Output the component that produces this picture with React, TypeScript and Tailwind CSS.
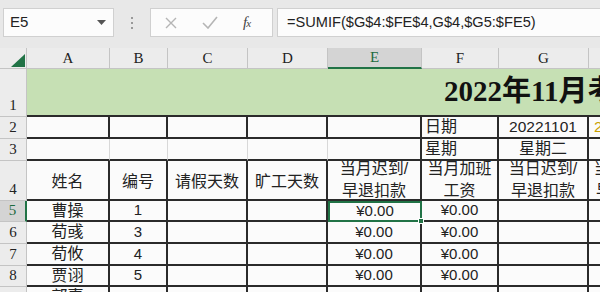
import React from "react";

const SERIF = { fontFamily: '"Liberation Serif", "Noto Sans CJK SC", serif' };

function Cell({
  children,
  className = "",
}: {
  children?: React.ReactNode;
  className?: string;
}) {
  return <div className={"overflow-visible whitespace-nowrap " + className}>{children}</div>;
}

export default function App() {
  const cols = ["A", "B", "C", "D", "E", "F", "G", "H"];
  const names = [
    ["曹操", "1"],
    ["荀彧", "3"],
    ["荀攸", "4"],
    ["贾诩", "5"],
  ];
  const cellB = "border-r-2 border-b-2 border-[#2b2b2b]";
  return (
    <div
      className="w-[600px] h-[292px] overflow-hidden bg-[#e8e8e8] text-[#222]"
      style={{ fontFamily: '"Liberation Sans", "Noto Sans CJK SC", sans-serif' }}
    >
      {/* formula bar */}
      <div className="h-[48px] flex items-start pt-[8px] pl-[3px]">
        <div className="w-[111px] h-[29px] bg-[#fcfcfc] border border-[#d0d0d0] flex items-center justify-between pl-[6px] pr-[7px]">
          <span className="text-[15px] text-[#222]">E5</span>
          <svg width="9" height="5" viewBox="0 0 9 5">
            <path d="M0 0 L9 0 L4.5 5 Z" fill="#555" />
          </svg>
        </div>
        <div className="w-[36px] h-[29px] flex flex-col items-center justify-center gap-[3px]">
          <div className="w-[2px] h-[2px] bg-[#999]" />
          <div className="w-[2px] h-[2px] bg-[#999]" />
          <div className="w-[2px] h-[2px] bg-[#999]" />
        </div>
        <div className="w-[123px] h-[29px] bg-[#fcfcfc] border border-[#d0d0d0] flex items-center pl-[14px] gap-[25px]">
          <svg width="12" height="12" viewBox="0 0 12 12">
            <path d="M1 1 L11 11 M11 1 L1 11" stroke="#b5b5b5" strokeWidth="1.4" />
          </svg>
          <svg width="16" height="13" viewBox="0 0 16 13">
            <path d="M1 7 L6 12 L15 1" stroke="#b5b5b5" strokeWidth="1.6" fill="none" />
          </svg>
          <span className="text-[15px] italic text-[#444] tracking-[-1px]" style={SERIF}>
            f<span className="text-[11px]">x</span>
          </span>
        </div>
        <div className="flex-1 ml-[4px] h-[29px] bg-[#fcfcfc] border border-r-0 border-[#d0d0d0] flex items-center pl-[9px]">
          <span className="text-[14.6px] text-[#222] whitespace-nowrap">=SUMIF($G$4:$FE$4,G$4,$G5:$FE5)</span>
        </div>
      </div>

      {/* sheet */}
      <div
        className="grid bg-[#fbfbfb]"
        style={{
          gridTemplateColumns: "27px 83px 58px 80px 80px 94px 77px 90px 80px",
          gridTemplateRows: "21px 48px 22px 22px 40px 21px 22px 22px 21px 22px",
        }}
      >
        {/* column header row */}
        <div className="bg-[#ececec] border-r border-b border-[#c4c4c4] flex items-end justify-end pr-[1px] pb-[1px]">
          <svg width="14" height="13" viewBox="0 0 14 13">
            <path d="M14 0 L14 13 L0 13 Z" fill="#217346" />
          </svg>
        </div>
        {cols.map((c) =>
          c === "E" ? (
            <div
              key={c}
              className="bg-[#d4d4d4] border-r border-[#c4c4c4] border-b-2 border-b-[#217346] flex items-center justify-center text-[15px] text-[#1d6b3f]"
              style={SERIF}
            >
              {c}
            </div>
          ) : (
            <div
              key={c}
              className="bg-[#ececec] border-r border-b border-[#c4c4c4] flex items-center justify-center text-[15px] text-[#222]"
              style={SERIF}
            >
              {c}
            </div>
          )
        )}

        {/* row 1 */}
        <div className="bg-[#ececec] border-r border-b border-[#c4c4c4] flex items-end justify-center text-[15px]" style={SERIF}>
          1
        </div>
        <div className="col-span-8 bg-[#c6e0b4] border-b-2 border-[#2b2b2b] flex items-center pl-[417px] overflow-hidden">
          <span className="text-[29px] font-bold whitespace-nowrap text-[#111]" style={SERIF}>
            2022年11月考勤表
          </span>
        </div>

        {/* row 2 */}
        <div className="bg-[#ececec] border-r border-b border-[#c4c4c4] flex items-end justify-center text-[15px]" style={SERIF}>
          2
        </div>
        <Cell className={cellB} />
        <Cell className={cellB} />
        <Cell className={cellB} />
        <Cell className={cellB} />
        <Cell className={cellB} />
        <Cell className={cellB + " flex items-center pl-[3px] text-[16px]"}>日期</Cell>
        <Cell className={cellB + " flex items-center justify-center text-[15.5px]"}>20221101</Cell>
        <Cell className={cellB + " flex items-center justify-center text-[15.5px] text-[#c8a000]"}>20221102</Cell>

        {/* row 3 */}
        <div className="bg-[#ececec] border-r border-b border-[#c4c4c4] flex items-end justify-center text-[15px]" style={SERIF}>
          3
        </div>
        <Cell className="border-r border-r-[#d8d8d8] border-b-2 border-b-[#2b2b2b]" />
        <Cell className="border-r border-r-[#d8d8d8] border-b-2 border-b-[#2b2b2b]" />
        <Cell className="border-r border-r-[#d8d8d8] border-b-2 border-b-[#2b2b2b]" />
        <Cell className="border-r border-r-[#d8d8d8] border-b-2 border-b-[#2b2b2b]" />
        <Cell className={cellB} />
        <Cell className={cellB + " flex items-center pl-[3px] text-[16px]"}>星期</Cell>
        <Cell className={cellB + " flex items-center justify-center text-[16px]"}>星期二</Cell>
        <Cell className={cellB + " flex items-center justify-center text-[16px]"}>星期三</Cell>

        {/* row 4 */}
        <div className="bg-[#ececec] border-r border-b border-[#c4c4c4] flex items-end justify-center text-[15px]" style={SERIF}>
          4
        </div>
        <Cell className={cellB + " flex items-center justify-center pt-[3px] text-[16px]"}>姓名</Cell>
        <Cell className={cellB + " flex items-center justify-center pt-[3px] text-[16px]"}>编号</Cell>
        <Cell className={cellB + " flex items-center justify-center pt-[3px] text-[16px]"}>请假天数</Cell>
        <Cell className={cellB + " flex items-center justify-center pt-[3px] text-[16px] overflow-hidden"}>旷工天数</Cell>
        <Cell className={cellB + " flex flex-col items-center justify-center text-[16px] leading-[22px]"}>
          <span>当月迟到/</span>
          <span>早退扣款</span>
        </Cell>
        <Cell className={cellB + " flex flex-col items-center justify-center text-[16px] leading-[22px]"}>
          <span>当月加班</span>
          <span>工资</span>
        </Cell>
        <Cell className={cellB + " flex flex-col items-center justify-center text-[16px] leading-[22px]"}>
          <span>当日迟到/</span>
          <span>早退扣款</span>
        </Cell>
        <Cell className={cellB + " flex flex-col items-center justify-center text-[16px] leading-[22px]"}>
          <span>当日迟到/</span>
          <span>早退扣款</span>
        </Cell>

        {/* rows 5-8 */}
        {names.map(([n, id], i) => (
          <React.Fragment key={n}>
            {i === 0 ? (
              <div
                className="bg-[#d4d4d4] border-r-2 border-r-[#217346] border-b border-b-[#c4c4c4] flex items-end justify-center text-[15px] text-[#1d6b3f]"
                style={SERIF}
              >
                {5 + i}
              </div>
            ) : (
              <div className="bg-[#ececec] border-r border-b border-[#c4c4c4] flex items-end justify-center text-[15px]" style={SERIF}>
                {5 + i}
              </div>
            )}
            <Cell className={cellB + " flex items-center justify-center text-[16px]"}>{n}</Cell>
            <Cell className={cellB + " flex items-center justify-center text-[15px]"}>{id}</Cell>
            <Cell className={cellB} />
            <Cell className={cellB} />
            {i === 0 ? (
              <div className="relative border-2 border-[#217346] flex items-center justify-center text-[15px]">
                ¥0.00
                <div className="absolute right-[-4px] bottom-[-4px] w-[6px] h-[6px] bg-[#217346] border border-white" />
              </div>
            ) : (
              <Cell className={cellB + " flex items-center justify-center text-[15px]"}>¥0.00</Cell>
            )}
            <Cell className={cellB + " flex items-center justify-center text-[15px]"}>¥0.00</Cell>
            <Cell className={cellB} />
            <Cell className={cellB} />
          </React.Fragment>
        ))}

        {/* row 9 */}
        <div className="bg-[#ececec] border-r border-b border-[#c4c4c4] flex items-end justify-center text-[15px]" style={SERIF}>
          9
        </div>
        <Cell className={cellB + " flex items-center justify-center text-[16px]"}>郭嘉</Cell>
        <Cell className={cellB} />
        <Cell className={cellB} />
        <Cell className={cellB} />
        <Cell className={cellB + " flex items-center justify-center text-[15px]"}>¥0.00</Cell>
        <Cell className={cellB + " flex items-center justify-center text-[15px]"}>¥0.00</Cell>
        <Cell className={cellB} />
        <Cell className={cellB} />
      </div>
    </div>
  );
}
